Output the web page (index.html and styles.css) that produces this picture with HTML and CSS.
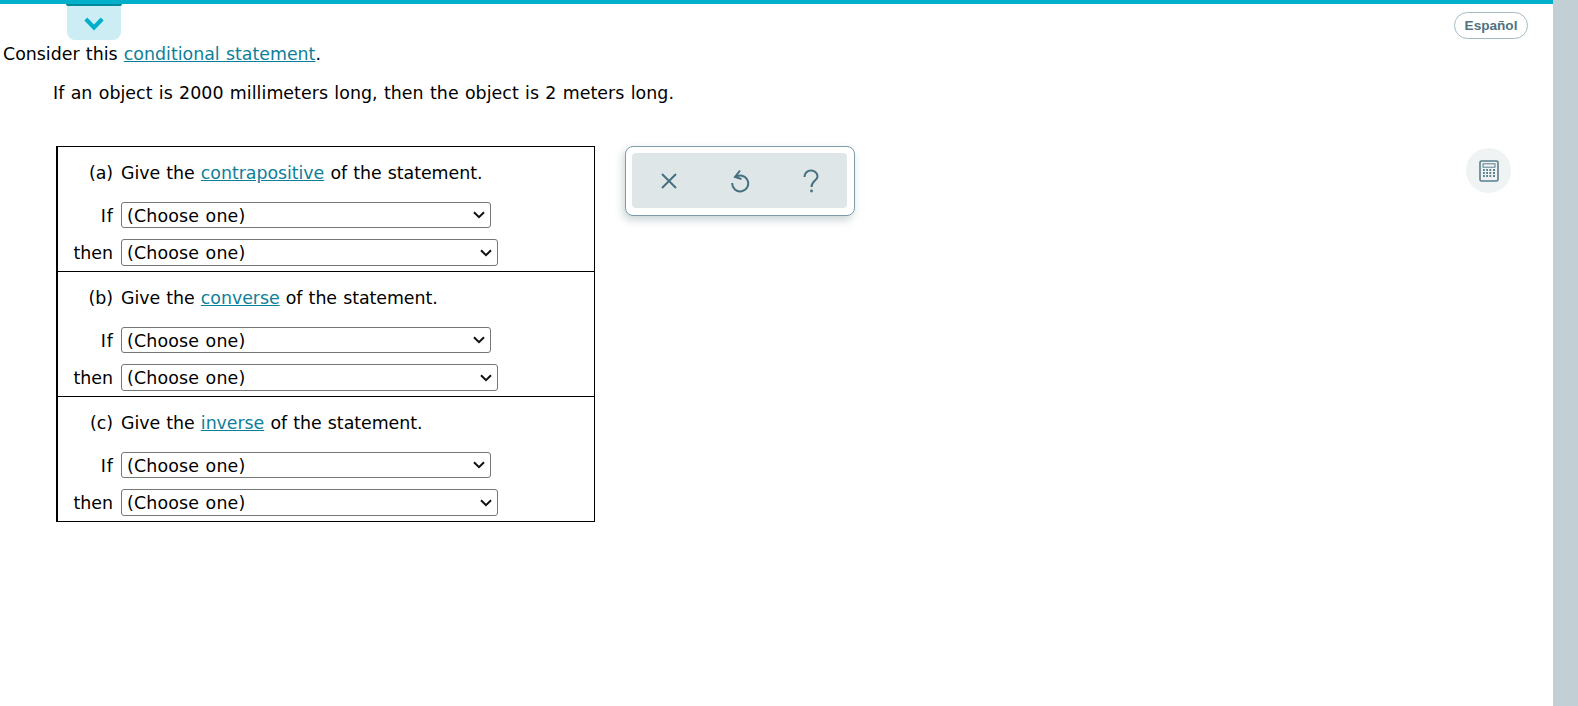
FILE: index.html
```html
<!DOCTYPE html>
<html lang="en">
<head>
<meta charset="utf-8">
<title>Conditional statement</title>
<link rel="stylesheet" href="styles.css">
</head>
<body>
<div class="page">
  <main class="main">
    <div class="topbar"></div>
    <button class="tab" aria-label="Collapse">
      <svg width="20" height="14" viewBox="0 0 20 14"><path d="M1.8 2 L10 10.5 L18.2 2" fill="none" stroke="#00b0ca" stroke-width="4"/></svg>
    </button>
    <button class="lang">Español</button>
    <p class="intro">Consider this <a href="#">conditional statement</a>.</p>
    <p class="statement">If an object is 2000 millimeters long, then the object is 2 meters long.</p>
    <div class="work">
      <div class="table">
        <section class="row">
          <div class="line head"><span class="lab">(a)</span><span>Give the <a href="#">contrapositive</a> of the statement.</span></div>
          <div class="line if"><span class="lab">If</span><select class="sel-if"><option>(Choose one)</option></select></div>
          <div class="line then"><span class="lab">then</span><select class="sel-then"><option>(Choose one)</option></select></div>
        </section>
        <section class="row">
          <div class="line head"><span class="lab">(b)</span><span>Give the <a href="#">converse</a> of the statement.</span></div>
          <div class="line if"><span class="lab">If</span><select class="sel-if"><option>(Choose one)</option></select></div>
          <div class="line then"><span class="lab">then</span><select class="sel-then"><option>(Choose one)</option></select></div>
        </section>
        <section class="row">
          <div class="line head"><span class="lab">(c)</span><span>Give the <a href="#">inverse</a> of the statement.</span></div>
          <div class="line if"><span class="lab">If</span><select class="sel-if"><option>(Choose one)</option></select></div>
          <div class="line then"><span class="lab">then</span><select class="sel-then"><option>(Choose one)</option></select></div>
        </section>
      </div>
      <div class="panel">
        <div class="panel-inner">
          <svg class="ic" width="24" height="24" viewBox="0 0 24 24"><path d="M5 5 L19 19 M19 5 L5 19" fill="none" stroke="#47707f" stroke-width="2"/></svg>
          <svg class="ic" width="24" height="24" viewBox="0 0 24 24"><path d="M7.2 8.2 A8 8 0 1 1 4.2 14 M12 1.5 L7 8 L13.5 10" fill="none" stroke="#47707f" stroke-width="2"/></svg>
          <svg class="ic" width="24" height="24" viewBox="0 0 24 24"><path d="M5.5 8 C5.5 4 8.5 1.5 12 1.5 C15.5 1.5 18.5 4 18.5 7.5 C18.5 11.5 12.5 12 12.5 18" fill="none" stroke="#47707f" stroke-width="2"/><circle cx="12.5" cy="22" r="1.4" fill="#47707f"/></svg>
        </div>
      </div>
      <button class="calc" aria-label="Calculator">
        <svg width="20" height="22" viewBox="0 0 20 22"><rect x="1" y="1" width="18" height="20" rx="1.5" fill="none" stroke="#5b7f8d" stroke-width="1.6"/><rect x="4" y="3.8" width="12" height="3.4" fill="none" stroke="#5b7f8d" stroke-width="1"/><path d="M4 10 h1.8 M7.2 10 h1.8 M10.4 10 h1.8 M14 10 h2 M4 13 h1.8 M7.2 13 h1.8 M10.4 13 h1.8 M14 13 h2 M4 16 h1.8 M7.2 16 h1.8 M10.4 16 h1.8 M14 16 h2" stroke="#5b7f8d" stroke-width="1.8" fill="none"/></svg>
      </button>
    </div>
  </main>
  <div class="scroll"></div>
</div>
</body>
</html>
```
FILE: styles.css
```css
* { box-sizing: border-box; }
html, body { margin: 0; height: 100%; overflow: hidden; }
body { background: #fff; color: #000; font-family: "DejaVu Sans", Verdana, sans-serif; font-size: 17.4px; word-spacing: .7px; }
a { color: #0f7f99; text-decoration: underline; }
.page { display: flex; height: 706px; }
.main { position: relative; width: 1553px; flex: none; }
.scroll { flex: 1; background: #c2d0d6; }
.topbar { height: 4px; background: #00b0ca; }
.tab { position: absolute; top: 4px; left: 67px; width: 54px; height: 36px; padding: 4px 0 0; border: 0; border-radius: 0 0 8px 8px; background: #ccedf3; display: flex; align-items: center; justify-content: center; }
.tab::before { content: ""; position: absolute; top: 0; left: -1px; right: -1px; height: 2px; background: #00899e; border-radius: 0 0 2px 2px; }
.lang { position: absolute; top: 12px; left: 1454px; width: 74px; height: 27px; padding: 0; border: 1px solid #a3bac3; border-radius: 14px; background: #fff; color: #4f7280; font: bold 13.6px "Liberation Sans", Arial, sans-serif; word-spacing: 0; }
.intro { margin: 0; padding: 38px 0 0 3px; line-height: 24px; height: 62px; }
.statement { margin: 0; padding: 15px 0 0 53px; line-height: 24px; height: 80px; letter-spacing: .05px; }
.work { display: flex; align-items: flex-start; padding-left: 56px; padding-right: 42px; }
.table { width: 539px; flex: none; border: 1px solid #000; border-left-width: 2px; }
.row { height: 125px; padding-top: 14px; border-bottom: 1px solid #000; }
.row:last-child { border-bottom: 0; height: 124px; }
.line { display: flex; align-items: center; }
.lab { width: 55px; margin-right: 8px; text-align: right; flex: none; }
.head { height: 24px; margin-bottom: 17px; letter-spacing: -.05px; }
.if { margin-bottom: 11px; height: 26px; }
.if .lab { padding-top: 2px; letter-spacing: 1px; width: 56px; margin-right: 7px; }
.then { height: 27px; }
select { appearance: none; font-family: "DejaVu Sans", Verdana, sans-serif; font-size: 17.4px; word-spacing: .7px; letter-spacing: .17px; color: #000; background: #fff url("data:image/svg+xml,%3Csvg xmlns='http://www.w3.org/2000/svg' width='12' height='8' viewBox='0 0 12 8'%3E%3Cpath d='M1 1.2 L6 6.2 L11 1.2' fill='none' stroke='%23111' stroke-width='2'/%3E%3C/svg%3E") no-repeat right 5px center; border: 1px solid #767676; border-radius: 3px; padding: 0 5px; margin: 0; }
.sel-if { width: 370px; height: 26px; padding-top: 2px; }
.sel-then { width: 377px; height: 27px; }
.panel { margin-left: 30px; width: 230px; height: 70px; padding: 6px 7px 6px 6px; border: 1px solid #7e9da9; border-radius: 8px; background: #fff; box-shadow: -2px 4px 8px rgba(70,100,110,.28); flex: none; }
.panel-inner { height: 55px; background: #dfe6e8; border-radius: 4px; display: flex; align-items: center; justify-content: center; gap: 47px; }
.calc { margin-left: auto; margin-top: 2px; width: 45px; height: 45px; padding: 0; border: 0; border-radius: 50%; background: #eff3f4; display: flex; align-items: center; justify-content: center; }
```
